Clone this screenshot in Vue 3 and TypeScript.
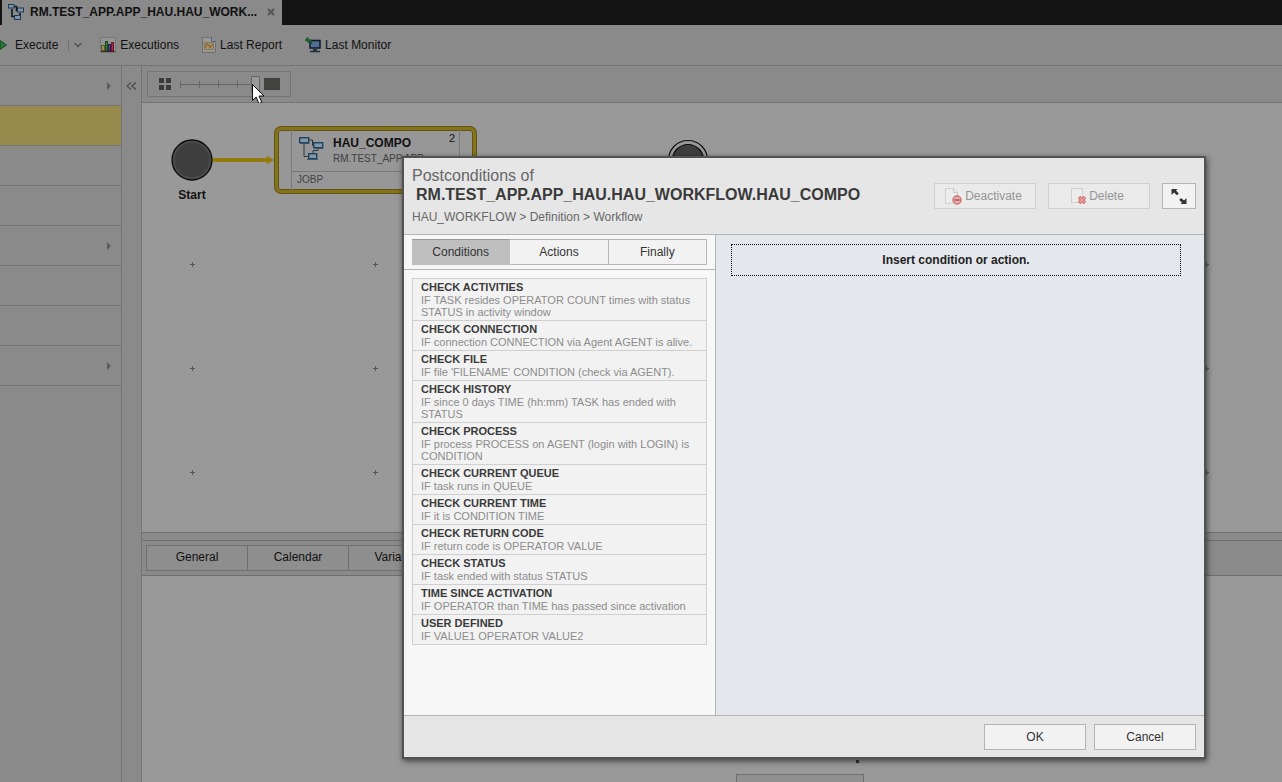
<script setup lang="ts">
import { ref } from 'vue'

interface Entry {
  title: string
  text: string
}

const sideRows = [
  { arrow: true, active: false },
  { arrow: false, active: true },
  { arrow: false, active: false },
  { arrow: false, active: false },
  { arrow: true, active: false },
  { arrow: false, active: false },
  { arrow: false, active: false },
  { arrow: true, active: false },
]

const lowerTabs = ['General', 'Calendar', 'Variables']
const tabs = ['Conditions', 'Actions', 'Finally']
const activeTab = ref('Conditions')
const zoom = ref(4)

const gridRows = [159, 263, 367]
const gridCols = [48, 231, 1062]
const marks = gridRows.flatMap((y) => gridCols.map((x) => ({ x, y })))

const entries: Entry[] = [
  { title: 'CHECK ACTIVITIES', text: 'IF TASK resides OPERATOR COUNT times with status STATUS in activity window' },
  { title: 'CHECK CONNECTION', text: 'IF connection CONNECTION via Agent AGENT is alive.' },
  { title: 'CHECK FILE', text: "IF file 'FILENAME' CONDITION (check via AGENT)." },
  { title: 'CHECK HISTORY', text: 'IF since 0 days TIME (hh:mm) TASK has ended with STATUS' },
  { title: 'CHECK PROCESS', text: 'IF process PROCESS on AGENT (login with LOGIN) is CONDITION' },
  { title: 'CHECK CURRENT QUEUE', text: 'IF task runs in QUEUE' },
  { title: 'CHECK CURRENT TIME', text: 'IF it is CONDITION TIME' },
  { title: 'CHECK RETURN CODE', text: 'IF return code is OPERATOR VALUE' },
  { title: 'CHECK STATUS', text: 'IF task ended with status STATUS' },
  { title: 'TIME SINCE ACTIVATION', text: 'IF OPERATOR than TIME has passed since activation' },
  { title: 'USER DEFINED', text: 'IF VALUE1 OPERATOR VALUE2' },
]
</script>

<template>
  <div class="app">
    <header class="tabstrip">
      <div class="doc-tab">
        <svg class="doc-icon" width="16" height="16" viewBox="0 0 16 16" fill="none">
          <path d="M4 5v7.500h2.500M6 2.500h2.500V6.500h1.500M12 9v2.500" stroke="#0c141c" stroke-width="1.600" />
          <rect x="0.500" y="0.500" width="5.500" height="3.500" fill="#7f98b0" stroke="#1e3850" />
          <rect x="9.500" y="4" width="6" height="4" fill="#7f98b0" stroke="#1e3850" />
          <rect x="6.500" y="11.500" width="6" height="4" fill="#7f98b0" stroke="#1e3850" />
        </svg>
        <span class="doc-title">RM.TEST_APP.APP_HAU.HAU_WORK...</span>
        <button class="close" aria-label="Close tab">
          <svg width="8" height="8" viewBox="0 0 8 8"><path d="M1 1l6 6M7 1L1 7" stroke="#555" stroke-width="2" /></svg>
        </button>
      </div>
    </header>

    <nav class="toolbar">
      <button class="tool execute">
        <svg width="8" height="10" viewBox="0 0 8 10"><path d="M0 0.500L6.500 5L0 9.500z" fill="#2a7435" stroke="#174d20" /></svg>
        <span>Execute</span>
      </button>
      <button class="drop" aria-label="More execute options">
        <svg width="8" height="6" viewBox="0 0 8 6" fill="none"><path d="M0.500 1L4 4.500L7.500 1" stroke="#505050" stroke-width="1.300" /></svg>
      </button>
      <button class="tool executions">
        <svg width="16" height="16" viewBox="0 0 16 16">
          <rect x="0.500" y="0.500" width="15" height="15" fill="#949494" stroke="#777" />
          <rect x="1.500" y="8.500" width="3" height="5" fill="#93924f" stroke="#5a5a2c" />
          <rect x="5.500" y="4.500" width="2" height="9" fill="#3c7a3c" stroke="#1c4a22" />
          <rect x="8.500" y="7.500" width="2" height="6" fill="#4a4a7c" stroke="#23235a" />
          <rect x="11.500" y="5.500" width="2" height="8" fill="#a03048" stroke="#74122a" />
          <path d="M1 14.500h14" stroke="#4a1c24" />
        </svg>
        <span>Executions</span>
      </button>
      <button class="tool report">
        <svg width="14" height="16" viewBox="0 0 14 16" fill="none">
          <path d="M0.500 0.500h9l4 4v11h-13z" fill="#999" stroke="#6f6f6f" />
          <path d="M9.500 0.500v4h4" fill="#8794a2" stroke="#4c6077" />
          <rect x="2.500" y="5.500" width="9" height="7" fill="#9c9478" stroke="#85795a" />
          <path d="M3 11l2-4l2 1.500l1 2l3-3" stroke="#95651c" stroke-width="1.200" />
        </svg>
        <span>Last Report</span>
      </button>
      <button class="tool monitor">
        <svg width="16" height="16" viewBox="0 0 16 16" fill="none">
          <rect x="5" y="3.500" width="10" height="7.500" fill="#506f98" stroke="#141e2a" stroke-width="1.600" />
          <path d="M8 12h4v2H8z" fill="#283848" />
          <path d="M5 14.500h10" stroke="#26313d" stroke-width="1.600" />
          <path d="M3.500 0.500L1 3l3 2.500M1 3h3.500c1.500 0 2 2 2 4" stroke="#1f5e32" stroke-width="1.600" />
        </svg>
        <span>Last Monitor</span>
      </button>
    </nav>

    <div class="workspace">
      <aside class="sidebar">
        <button v-for="(row, i) in sideRows" :key="i" class="side-row" :class="{ active: row.active }" :aria-label="'Section ' + (i + 1)">
          <svg v-if="row.arrow" width="4" height="8" viewBox="0 0 4 8"><path d="M0 0l4 4l-4 4z" fill="#5c5c5c" /></svg>
        </button>
      </aside>
      <div class="collapse">
        <button aria-label="Collapse sidebar">
          <svg width="11" height="8" viewBox="0 0 11 8" fill="none"><path d="M5 0.500L1 4l4 3.500M10 0.500L6 4l4 3.500" stroke="#505050" stroke-width="1.500" /></svg>
        </button>
      </div>

      <main class="main">
        <div class="zoombar">
          <div class="zoombox">
            <svg width="12" height="12" viewBox="0 0 12 12" fill="#3b3b3b">
              <rect width="5" height="5" /><rect x="7" width="5" height="5" /><rect y="7" width="5" height="5" /><rect x="7" y="7" width="5" height="5" />
            </svg>
            <input v-model.number="zoom" type="range" min="0" max="4" aria-label="Zoom" />
            <span class="full"></span>
          </div>
          <svg class="pointer" width="13" height="21" viewBox="0 0 13 21">
            <path d="M0.500 0.500v16l3.700-3.500l2.600 6.500l3-1.200L7 12h5z" fill="#fff" stroke="#111" />
          </svg>
        </div>

        <section class="canvas">
          <svg v-for="(m, i) in marks" :key="i" class="mark" :style="{ left: m.x + 'px', top: m.y + 'px' }" width="5" height="5" viewBox="0 0 5 5">
            <path d="M0 2.500h5M2.500 0v5" stroke="#585858" />
          </svg>
          <svg class="start" width="42" height="42" viewBox="0 0 42 42">
            <circle cx="21" cy="21" r="20" fill="#3e3e3e" stroke="#0c0c0c" stroke-width="1.300" />
            <circle cx="21" cy="21" r="18" fill="none" stroke="#494949" stroke-width="2" />
          </svg>
          <span class="start-label">Start</span>
          <svg class="link" width="62" height="10" viewBox="0 0 62 10">
            <rect y="3" width="56" height="4" fill="#94790d" />
            <path d="M54 0.500L61 5L54 9.500z" fill="#94790d" />
          </svg>
          <div class="node">
            <div class="node-in">
              <svg class="node-icon" width="25" height="25" viewBox="0 0 25 25" fill="none">
                <path d="M5 7v13.500h5M10 4h3.500v5.500h2M19 11v3.500h-5v3" stroke="#333" />
                <rect x="0.700" y="1.700" width="9" height="5" fill="#8298a8" stroke="#1d4262" stroke-width="1.400" />
                <rect x="14.700" y="6.700" width="9" height="5" fill="#8298a8" stroke="#1d4262" stroke-width="1.400" />
                <rect x="9.700" y="17.700" width="8" height="5" fill="#8298a8" stroke="#1d4262" stroke-width="1.400" />
                <path d="M1 7.500h9M15 12.500h9M8 23.500h11" stroke="#3d5568" />
              </svg>
              <div class="node-text">
                <strong>HAU_COMPO</strong>
                <span>RM.TEST_APP.APP</span>
              </div>
              <span class="count">2</span>
            </div>
            <div class="node-type">JOBP</div>
          </div>
          <svg class="end" width="42" height="42" viewBox="0 0 42 42">
            <circle cx="21" cy="21" r="19.500" fill="#999" stroke="#0c0c0c" stroke-width="1.200" />
            <circle cx="21" cy="21" r="15.500" fill="#3e3e3e" stroke="#0c0c0c" stroke-width="1.200" />
          </svg>
        </section>

        <div class="splitter"></div>
        <div class="lower-tabs">
          <button v-for="t in lowerTabs" :key="t">{{ t }}</button>
        </div>
        <section class="lower">
          <span class="dot"></span>
          <button class="ghost" aria-label="Edit"></button>
        </section>
      </main>
    </div>

    <div class="dialog" role="dialog" aria-labelledby="dlg-title">
      <header class="dlg-head">
        <div class="dlg-titles">
          <p class="lead">Postconditions of</p>
          <h1 id="dlg-title">RM.TEST_APP.APP_HAU.HAU_WORKFLOW.HAU_COMPO</h1>
          <p class="crumb">HAU_WORKFLOW &gt; Definition &gt; Workflow</p>
        </div>
        <div class="dlg-tools">
          <button class="btn" disabled>
            <svg width="17" height="17" viewBox="0 0 17 17" fill="none">
              <path d="M0.500 15.500v-15h8l4 4v3M0.500 15.500h7" fill="#ededed" stroke="#cfcfcf" />
              <path d="M8.500 0.500v4h4" stroke="#c8c8c8" />
              <circle cx="12" cy="12" r="4" fill="#e6b0b0" stroke="#cc7070" stroke-width="1.400" />
              <path d="M9.500 12h5" stroke="#b85050" stroke-width="1.600" />
            </svg>
            <span>Deactivate</span>
          </button>
          <button class="btn" disabled>
            <svg width="15" height="17" viewBox="0 0 15 17" fill="none">
              <rect x="0.500" y="0.500" width="11" height="14" fill="#ededed" stroke="#cfcfcf" />
              <path d="M8 9l6 6M14 9l-6 6" stroke="#cc7070" stroke-width="3.600" />
              <path d="M8.500 9.500l5 5M13.500 9.500l-5 5" stroke="#e9a5a5" stroke-width="1.200" />
            </svg>
            <span>Delete</span>
          </button>
          <button class="btn expand" aria-label="Maximize">
            <svg width="16" height="15" viewBox="0 0 16 15">
              <path d="M0.500 0h6L5 1.500l2.800 3L6 6.200L3 3.500L0.500 6zM15.500 15h-6l1.500-1.500l-2.800-2.500L10 9l3 2.500l2.500-2.500z" fill="#333" />
            </svg>
          </button>
        </div>
      </header>

      <div class="dlg-body">
        <div class="left">
          <div class="tabs" role="tablist">
            <button v-for="t in tabs" :key="t" role="tab" :aria-selected="t === activeTab" :class="{ on: t === activeTab }" @click="activeTab = t">{{ t }}</button>
          </div>
          <ul class="entries">
            <li v-for="e in entries" :key="e.title">
              <strong>{{ e.title }}</strong>
              <p>{{ e.text }}</p>
            </li>
          </ul>
        </div>
        <div class="right">
          <div class="dropzone">Insert condition or action.</div>
        </div>
      </div>

      <footer class="dlg-foot">
        <button class="btn">OK</button>
        <button class="btn">Cancel</button>
      </footer>
    </div>
  </div>
</template>

<style>
body {
  background: #999;
}
</style>

<style scoped>
* {
  box-sizing: border-box;
}
.app {
  position: relative;
  display: flex;
  flex-direction: column;
  height: 100vh;
  overflow: hidden;
  font: 12px/16px "Liberation Sans", Arial, sans-serif;
  color: #111;
  background: #8a8a8a;
}
button {
  font: inherit;
  color: inherit;
  margin: 0;
  padding: 0;
  border: 0;
  background: none;
}
svg {
  display: block;
  flex: none;
}
p,
h1,
ul {
  margin: 0;
  padding: 0;
}
.tabstrip {
  flex: none;
  height: 25px;
  padding-left: 2px;
  background: #131313;
}
.doc-tab {
  display: flex;
  align-items: center;
  width: 280px;
  height: 25px;
  padding: 0 7px 2px 6px;
  background: #8a8a8a;
}
.doc-title {
  flex: 1;
  margin-left: 6px;
  font-weight: bold;
  white-space: nowrap;
}
.toolbar {
  flex: none;
  display: flex;
  align-items: center;
  height: 41px;
  padding-bottom: 1px;
  border-bottom: 1px solid #747474;
}
.tool {
  display: flex;
  align-items: center;
  gap: 4px;
  white-space: nowrap;
}
.execute {
  gap: 7px;
}
.drop {
  margin-left: 10px;
  padding: 3px 0 3px 5px;
  border-left: 1px solid #707070;
}
.executions {
  margin-left: 18px;
}
.report {
  margin-left: 23px;
}
.monitor {
  margin-left: 23px;
}
.workspace {
  flex: 1;
  display: flex;
  min-height: 0;
}
.sidebar {
  display: flex;
  flex-direction: column;
  width: 122px;
  border-right: 1px solid #747474;
}
.side-row {
  display: flex;
  align-items: center;
  justify-content: flex-end;
  height: 40px;
  padding-right: 10px;
  border-bottom: 1px solid #747474;
}
.side-row.active {
  background: #978a4c;
}
.collapse {
  width: 20px;
  padding: 12px 4px;
  border-right: 1px solid #747474;
}
.collapse button {
  display: block;
  padding: 4px 0;
}
.main {
  flex: 1;
  display: flex;
  flex-direction: column;
  min-width: 0;
}
.zoombar {
  position: relative;
  flex: none;
  height: 37px;
  padding: 5px 5px;
  border-bottom: 1px solid #747474;
}
.zoombox {
  display: flex;
  align-items: center;
  width: 144px;
  height: 26px;
  padding-left: 11px;
  border: 1px solid #747474;
}
.zoombox input {
  appearance: none;
  width: 84px;
  height: 17px;
  margin: 0 4px 0 5px;
  background:
    linear-gradient(#666, #666) 4px 5px / 1px 7px no-repeat,
    linear-gradient(#666, #666) 23px 5px / 1px 7px no-repeat,
    linear-gradient(#666, #666) 42px 5px / 1px 7px no-repeat,
    linear-gradient(#666, #666) 61px 5px / 1px 7px no-repeat,
    linear-gradient(#666, #666) 4px 8px / 76px 1px no-repeat;
}
.zoombox input::-webkit-slider-thumb {
  appearance: none;
  width: 9px;
  height: 17px;
  border: 1px solid #666;
  border-radius: 1px;
  background: #999;
}
.full {
  width: 16px;
  height: 12px;
  background: #42423e;
}
.pointer {
  position: absolute;
  left: 110px;
  top: 18px;
}
.canvas {
  position: relative;
  flex: none;
  height: 429px;
  background: #999;
}
.mark,
.start,
.start-label,
.link,
.node,
.end {
  position: absolute;
}
.start {
  left: 29px;
  top: 36px;
}
.start-label {
  left: 29px;
  top: 84px;
  width: 42px;
  text-align: center;
  font-weight: bold;
}
.link {
  left: 71px;
  top: 52px;
}
.node {
  left: 133px;
  top: 24px;
  width: 201px;
  height: 66px;
  padding: 0 13px;
  border: 3px solid #84741c;
  border-radius: 6px;
  background: #979797;
  box-shadow: inset 0 0 0 1px #625514, 0 0 0 1px #625514;
}
.node-in {
  display: flex;
  height: 42px;
  padding: 6px 4px 0 7px;
  border: 1px solid #7a7a7a;
  border-top: 0;
}
.node-text {
  flex: 1;
  margin-left: 9px;
  white-space: nowrap;
}
.node-text strong,
.node-text span {
  display: block;
  line-height: 15px;
}
.node-text span {
  font-size: 10px;
  color: #404040;
}
.count {
  margin-top: -6px;
  font-size: 11px;
}
.node-type {
  height: 18px;
  padding-left: 5px;
  border-left: 1px solid #7a7a7a;
  border-right: 1px solid #7a7a7a;
  font-size: 10px;
  color: #444;
}
.end {
  left: 525px;
  top: 36px;
}
.splitter {
  flex: none;
  height: 9px;
  border: 1px solid #6f6f6f;
  border-width: 1px 0;
}
.lower-tabs {
  flex: none;
  display: flex;
  height: 35px;
  padding: 4px 4px;
  border-bottom: 1px solid #6f6f6f;
}
.lower-tabs button {
  width: 102px;
  height: 26px;
  margin-right: -1px;
  padding-bottom: 2px;
  border: 1px solid #6f6f6f;
  background: #8e8e8e;
}
.lower {
  position: relative;
  flex: 1;
  background: #999;
}
.dot,
.ghost {
  position: absolute;
}
.dot {
  left: 714px;
  top: 184px;
  width: 3px;
  height: 3px;
  background: #333;
}
.ghost {
  left: 594px;
  top: 198px;
  width: 128px;
  height: 26px;
  border: 1px solid #707070;
  background: #909090;
}
.dialog {
  position: absolute;
  inset: 156px 76px 23px 402px;
  display: flex;
  flex-direction: column;
  border: 2px solid #525252;
  background: #e6e6e6;
  box-shadow: 1px 2px 6px rgba(0, 0, 0, 0.6);
}
.dlg-head {
  flex: none;
  display: flex;
  justify-content: space-between;
  height: 77px;
  padding: 8px 8px 0;
  border-bottom: 1px solid #b4b4b4;
}
.lead {
  font-size: 16px;
  line-height: 19px;
  color: #666;
}
h1 {
  padding-left: 4px;
  font-size: 16px;
  line-height: 19px;
  color: #3a3a3a;
}
.crumb {
  margin-top: 5px;
  color: #666;
}
.dlg-tools {
  display: flex;
  gap: 12px;
  padding-top: 17px;
}
.btn {
  display: flex;
  align-items: center;
  justify-content: center;
  gap: 3px;
  width: 102px;
  height: 26px;
  border: 1px solid #b4b4b4;
  background: #f2f2f2;
  color: #333;
}
.btn:disabled {
  padding-right: 3px;
  border-color: #cfcfcf;
  background: #eaeaea;
  color: #959595;
}
.expand {
  width: 34px;
}
.dlg-body {
  flex: 1;
  display: flex;
  min-height: 0;
}
.left {
  width: 312px;
  background: #f7f7f7;
  border-right: 1px solid #b4b4b4;
}
.tabs {
  display: flex;
  height: 35px;
  padding: 4px 8px;
  border-bottom: 1px solid #b4b4b4;
}
.tabs button {
  flex: 1;
  height: 26px;
  border: 1px solid #b4b4b4;
  border-left-width: 0;
  background: #f2f2f2;
  color: #333;
}
.tabs .on {
  border-color: #999 #bfbfbf #bfbfbf;
  background: #bfbfbf;
}
.entries {
  margin: 8px;
  border: 1px solid #cfcfcf;
  border-bottom: 0;
  list-style: none;
  background: #f2f2f2;
}
.entries li {
  padding: 2px 8px;
  border-bottom: 1px solid #cfcfcf;
  font-size: 11px;
}
.entries strong {
  display: block;
  line-height: 13px;
  color: #3a3a3a;
}
.entries p {
  line-height: 12px;
  color: #8c8c8c;
}
.right {
  flex: 1;
  padding: 9px 23px 0 15px;
  background: #e4e8ed;
}
.dropzone {
  height: 32px;
  border: 1px dotted #111;
  line-height: 30px;
  font-weight: bold;
  text-align: center;
  color: #222;
}
.dlg-foot {
  flex: none;
  display: flex;
  justify-content: flex-end;
  gap: 8px;
  height: 42px;
  padding: 8px;
  border-top: 1px solid #b4b4b4;
}
</style>
